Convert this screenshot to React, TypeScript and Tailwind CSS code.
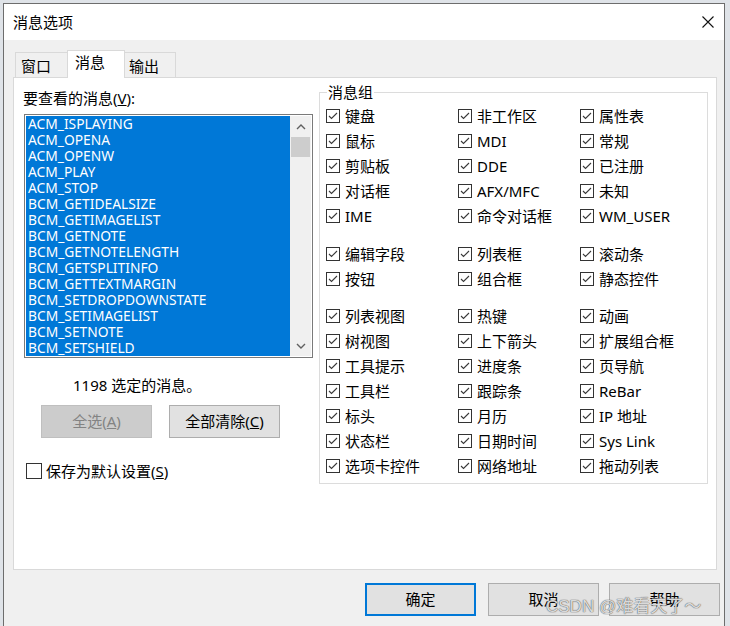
import React from "react";

const items = [
  "ACM_ISPLAYING",
  "ACM_OPENA",
  "ACM_OPENW",
  "ACM_PLAY",
  "ACM_STOP",
  "BCM_GETIDEALSIZE",
  "BCM_GETIMAGELIST",
  "BCM_GETNOTE",
  "BCM_GETNOTELENGTH",
  "BCM_GETSPLITINFO",
  "BCM_GETTEXTMARGIN",
  "BCM_SETDROPDOWNSTATE",
  "BCM_SETIMAGELIST",
  "BCM_SETNOTE",
  "BCM_SETSHIELD",
];

const g1 = [
  ["键盘", "非工作区", "属性表"],
  ["鼠标", "MDI", "常规"],
  ["剪贴板", "DDE", "已注册"],
  ["对话框", "AFX/MFC", "未知"],
  ["IME", "命令对话框", "WM_USER"],
];
const g2 = [
  ["编辑字段", "列表框", "滚动条"],
  ["按钮", "组合框", "静态控件"],
];
const g3 = [
  ["列表视图", "热键", "动画"],
  ["树视图", "上下箭头", "扩展组合框"],
  ["工具提示", "进度条", "页导航"],
  ["工具栏", "跟踪条", "ReBar"],
  ["标头", "月历", "IP 地址"],
  ["状态栏", "日期时间", "Sys Link"],
  ["选项卡控件", "网络地址", "拖动列表"],
];

function Check({ label }: { label: string }) {
  return (
    <div className="flex items-center h-[25px]">
      <span className="w-[14px] h-[14px] border border-[#333333] bg-white flex items-center justify-center shrink-0">
        <svg width="12" height="12" viewBox="0 0 12 12">
          <path d="M2 6 L4.5 8.5 L10 3" fill="none" stroke="#3a3a3a" strokeWidth="1.1" />
        </svg>
      </span>
      <span className="ml-[5px] text-[15px] leading-[20px] whitespace-nowrap">{label}</span>
    </div>
  );
}

function Group({ rows, className }: { rows: string[][]; className?: string }) {
  return (
    <div className={"grid grid-cols-[132px_122px_1fr] " + (className ?? "")}>
      {rows.flat().map((l, i) => (
        <Check key={i} label={l} />
      ))}
    </div>
  );
}

export default function App() {
  return (
    <div className="relative w-[730px] h-[626px] overflow-hidden bg-[#dfe3e8] font-['Noto_Sans','Noto_Sans_CJK_SC',sans-serif] text-black">
      {/* dialog window */}
      <div className="ml-[3px] mt-[3px] w-[722px] h-[640px] border border-[#6d6d6d] bg-[#f0f0f0] flex flex-col">
        {/* title bar */}
        <div className="h-[36px] bg-white flex items-center justify-between pl-[9px] pr-[10px] shrink-0">
          <span className="text-[15px] leading-[20px]">消息选项</span>
          <svg width="12" height="12" viewBox="0 0 12 12">
            <path d="M0.5 0.5 L11.5 11.5 M11.5 0.5 L0.5 11.5" stroke="#111111" strokeWidth="1.1" />
          </svg>
        </div>

        {/* client */}
        <div className="pt-[10px] flex flex-col">
          {/* tabs */}
          <div className="flex items-end h-[28px] pl-[11px]">
            <div className="w-[53px] h-[26px] border border-b-0 border-[#d9d9d9] bg-[#f0f0f0] pl-[5px] pt-[3px] text-[15px] leading-[20px]">
              窗口
            </div>
            <div className="relative z-10 -ml-px w-[58px] h-[28px] border border-b-0 border-[#d9d9d9] bg-white pl-[7px] pt-[1px] text-[15px] leading-[20px]">
              消息
            </div>
            <div className="-ml-px w-[52px] h-[26px] border border-b-0 border-[#d9d9d9] bg-[#f0f0f0] pl-[4px] pt-[3px] text-[15px] leading-[20px]">
              输出
            </div>
          </div>

          {/* panel */}
          <div className="relative -mt-px ml-[9px] w-[704px] h-[493px] border border-[#d9d9d9] bg-white flex">
            {/* left column */}
            <div className="w-[305px] pl-[10px] flex flex-col">
              <div className="mt-[12px] -ml-[1px] text-[15px] leading-[16px]">
                要查看的消息(<span className="underline">V</span>):
              </div>
              <div className="mt-[8px] w-[289px] h-[244px] border border-[#7a7a7a] p-[1px] flex">
                <div className="w-[264px] bg-[#0078d7]">
                  {items.map((it) => (
                    <div key={it} className="h-[16px] pl-[2px] text-[13.8px] leading-[16px] text-white whitespace-nowrap">
                      {it}
                    </div>
                  ))}
                </div>
                <div className="w-[21px] bg-[#f0f0f0] flex flex-col">
                  <div className="h-[21px] flex items-center justify-center">
                    <svg width="10" height="6" viewBox="0 0 10 6">
                      <path d="M1 5 L5 1 L9 5" fill="none" stroke="#606060" strokeWidth="1.4" />
                    </svg>
                  </div>
                  <div className="h-[20px] mx-[1px] bg-[#cdcdcd]" />
                  <div className="flex-1" />
                  <div className="h-[21px] flex items-center justify-center">
                    <svg width="10" height="6" viewBox="0 0 10 6">
                      <path d="M1 1 L5 5 L9 1" fill="none" stroke="#606060" strokeWidth="1.4" />
                    </svg>
                  </div>
                </div>
              </div>
              <div className="mt-[19px] ml-[49px] text-[15px] leading-[16px]">1198 选定的消息。</div>
              <div className="mt-[12px] ml-[17px] flex gap-[17px]">
                <div className="w-[111px] h-[33px] bg-[#cccccc] border border-[#bfbfbf] flex items-center justify-center text-[15px] text-[#838383]">
                  全选(<span className="underline">A</span>)
                </div>
                <div className="w-[111px] h-[33px] bg-[#e1e1e1] border border-[#adadad] flex items-center justify-center text-[15px]">
                  全部清除(<span className="underline">C</span>)
                </div>
              </div>
              <div className="mt-[25px] ml-[2px] flex items-center">
                <span className="w-[16px] h-[16px] border border-[#333333] bg-white" />
                <span className="ml-[4px] text-[15px] leading-[16px]">
                  保存为默认设置(<span className="underline">S</span>)
                </span>
              </div>
            </div>

            {/* group box */}
            <div className="relative mt-[14px] w-[389px] h-[392px] border border-[#dcdcdc] pl-[6px] pt-[10px]">
              <span className="absolute left-[7px] -top-[9px] bg-white px-[1px] text-[15px] leading-[16px]">消息组</span>
              <Group rows={g1} />
              <Group rows={g2} className="mt-[13px]" />
              <Group rows={g3} className="mt-[12px]" />
            </div>
          </div>

          {/* bottom buttons */}
          <div className="mt-[13px] ml-[361px] flex">
            <div className="w-[111px] h-[33px] bg-[#e1e1e1] border-2 border-[#0078d7] flex items-center justify-center text-[15px]">
              确定
            </div>
            <div className="ml-[12px] w-[111px] h-[33px] bg-[#e1e1e1] border border-[#adadad] flex items-center justify-center text-[15px]">
              取消
            </div>
            <div className="ml-[10px] w-[111px] h-[33px] bg-[#e1e1e1] border border-[#adadad] flex items-center justify-center text-[15px]">
              帮助
            </div>
          </div>
        </div>
      </div>

      {/* watermark */}
      <div className="absolute left-[546px] top-[597px] text-[17px] leading-[20px] text-[rgba(255,255,255,0.8)] [text-shadow:0_0_1px_#555,0_0_1px_#555] font-['Liberation_Sans','Noto_Sans_CJK_SC',sans-serif] whitespace-nowrap">
        CSDN @难看天了～
      </div>
    </div>
  );
}
